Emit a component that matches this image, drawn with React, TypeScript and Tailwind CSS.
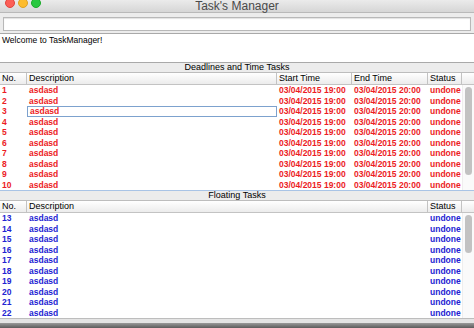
const font = { fontFamily: '"Liberation Sans", Arial, sans-serif' };

const deadlines = Array.from({ length: 10 }, (_, i) => i + 1);
const floating = Array.from({ length: 10 }, (_, i) => i + 13);

const HeaderCell = ({ label }: { label: string }) => (
  <div className="h-full pl-[2px] flex items-center border-r border-[#c3c3c3]">{label}</div>
);

const Scrollbar = ({ top, height }: { top: number; height: number }) => (
  <div className="w-[12px] bg-[#fafafa] border-l border-[#eeeeee] relative">
    <div
      className="absolute left-[2px] w-[7px] rounded-full bg-[#c2c2c2]"
      style={{ top, height }}
    />
  </div>
);

const App = () => {
  return (
    <div
      className="w-[474px] h-[328px] bg-[#ececec] overflow-hidden flex flex-col text-black"
      style={font}
    >
      {/* title bar */}
      <div className="h-[13px] relative flex items-center justify-center bg-gradient-to-b from-[#ebebeb] to-[#d6d6d6] border-b border-[#b9b9b9]">
        <div className="absolute left-[5px] top-[-2px] flex gap-[3px]">
          <div className="w-[10px] h-[10px] rounded-full bg-[#fc5f57] border border-[#e0443e]" />
          <div className="w-[10px] h-[10px] rounded-full bg-[#fdbc2e] border border-[#dea123]" />
          <div className="w-[10px] h-[10px] rounded-full bg-[#29c840] border border-[#1aab29]" />
        </div>
        <span className="text-[12px] leading-[13px] text-[#4a4a4a]">Task's Manager</span>
      </div>

      {/* input */}
      <div className="mx-[3px] mt-[4px] h-[14px] bg-white border border-[#b8b8b8] shadow-[inset_0_1px_1px_rgba(0,0,0,0.12)]" />

      {/* welcome */}
      <div className="mt-[2px] h-[30px] bg-white border-y border-[#a9a9a9] px-[2px] text-[8.5px] leading-[12px]">
        Welcome to TaskManager!
      </div>

      {/* deadlines */}
      <div className="h-[10px] flex items-center justify-center text-[9px] leading-none bg-[#ececec] border-b border-[#bdbdbd]">
        Deadlines and Time Tasks
      </div>
      <div className="grid grid-cols-[27px_250px_75px_76px_34px_12px] h-[12px] text-[9px] leading-none bg-gradient-to-b from-white to-[#ececec] border-b border-[#c3c3c3]">
        <HeaderCell label="No." />
        <HeaderCell label="Description" />
        <HeaderCell label="Start Time" />
        <HeaderCell label="End Time" />
        <HeaderCell label="Status" />
        <div />
      </div>
      <div className="flex bg-white border-b border-[#a9c4e6]">
        <div className="flex-1 flex flex-col">
          {deadlines.map((n) => (
            <div
              key={n}
              className="grid grid-cols-[27px_250px_75px_76px_34px] h-[10.5px] text-[8.5px] font-bold leading-none text-[#ec1c24]"
            >
              <div className="pl-[2px] flex items-center">{n}</div>
              <div
                className={`pl-[2px] flex items-center ${n === 3 ? "border border-[#7da2ce]" : ""}`}
              >
                asdasd
              </div>
              <div className="pl-[2px] flex items-center">03/04/2015 19:00</div>
              <div className="pl-[2px] flex items-center">03/04/2015 20:00</div>
              <div className="pl-[2px] flex items-center">undone</div>
            </div>
          ))}
        </div>
        <Scrollbar top={2} height={88} />
      </div>

      {/* floating */}
      <div className="h-[10px] flex items-center justify-center text-[9px] leading-none bg-[#ececec] border-b border-[#bdbdbd]">
        Floating Tasks
      </div>
      <div className="grid grid-cols-[27px_401px_34px_12px] h-[12px] text-[9px] leading-none bg-gradient-to-b from-white to-[#ececec] border-b border-[#c3c3c3]">
        <HeaderCell label="No." />
        <HeaderCell label="Description" />
        <HeaderCell label="Status" />
        <div />
      </div>
      <div className="flex bg-white border-b border-[#bdbdbd]">
        <div className="flex-1 flex flex-col">
          {floating.map((n) => (
            <div
              key={n}
              className="grid grid-cols-[27px_401px_34px] h-[10.5px] text-[8.5px] font-bold leading-none text-[#2323d2]"
            >
              <div className="pl-[2px] flex items-center">{n}</div>
              <div className="pl-[2px] flex items-center">asdasd</div>
              <div className="pl-[2px] flex items-center">undone</div>
            </div>
          ))}
        </div>
        <Scrollbar top={2} height={38} />
      </div>

      <div className="h-[4px] bg-[#e4e4e4]" />
      <div className="flex-1 bg-gradient-to-b from-[#9a9a9a] to-[#5c5c5c]" />
    </div>
  );
};

export default App;
